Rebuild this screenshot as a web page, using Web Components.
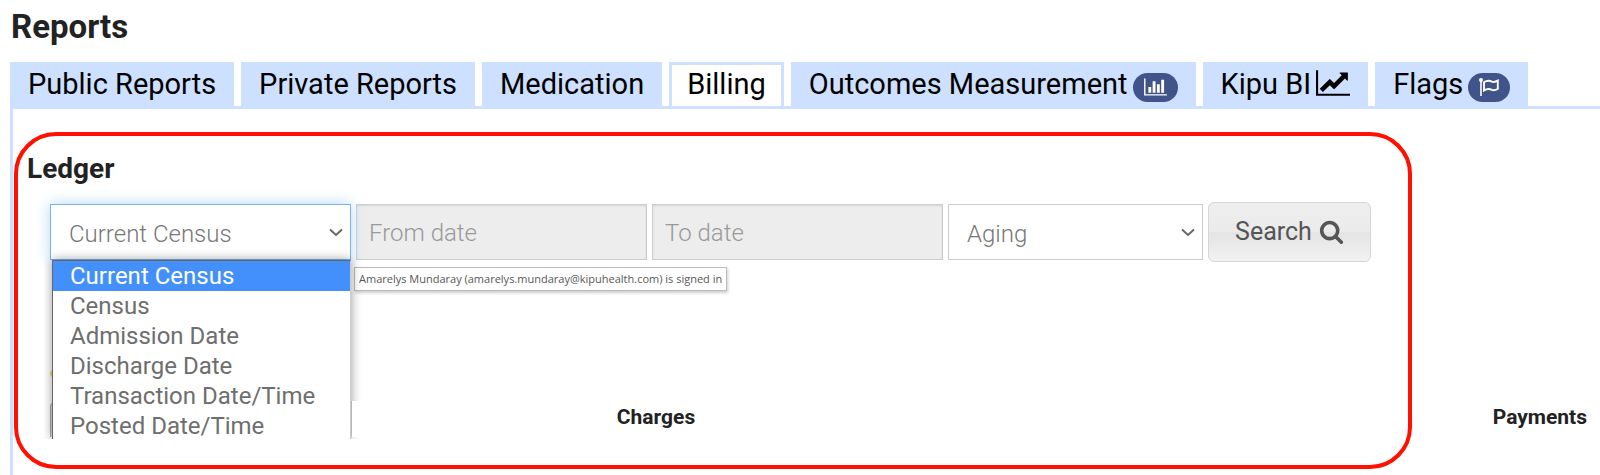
<!DOCTYPE html>
<html lang="en">
<head>
<meta charset="utf-8">
<title>Reports</title>
<style>
    body {
        margin: 0;
        background: #fff;
        color: #222;
        font-family: Roboto, "Liberation Sans", sans-serif;
        --tab: #cde0ff;
        --field-border: #ccc;
    }
</style>
</head>
<body>
<reports-page></reports-page>

<script>
const ICONS = {
    bars: ["0 0 2048 1792", `<path d="M640 896v512h-256v-512h256zm384-512v1024h-256v-1024h256zm1024 1152v128h-2048v-1536h128v1408h1920zm-640-896v768h-256v-768h256zm384-384v1152h-256v-1152h256z"/>`],
    line: ["0 0 2048 1792", `<path d="M2048 1536v128h-2048v-1536h128v1408h1920zm-128-1248v435q0 21-19.5 29.5t-35.5-7.5l-121-121-633 633q-10 10-23 10t-23-10l-233-233-416 416-192-192 585-585q10-10 23-10t23 10l233 233 464-464-121-121q-16-16-7.5-35.5t29.5-19.5h435q14 0 23 9t9 23z"/>`],
    search: ["0 0 1792 1792", `<path d="M1216 832q0-185-131.5-316.5t-316.5-131.5-316.5 131.5-131.5 316.5 131.5 316.5 316.5 131.5 316.5-131.5 131.5-316.5zm512 832q0 52-38 90t-90 38q-54 0-90-38l-343-342q-179 124-399 124-143 0-273.5-55.5t-225-150-150-225-55.5-273.5 55.5-273.5 150-225 225-150 273.5-55.5 273.5 55.5 225 150 150 225 55.5 273.5q0 220-124 399l343 343q37 37 37 90z"/>`],
    flag: ["0 0 20 18", `<circle cx="2" cy="2" r="2"/><path d="M1.2 2h1.600v16H1.200z"/><path d="M5 4.200c4-2.600 6-1.600 8-.6 2 .9 3.600.3 5.800-.9v8.300c-2.200 1.200-3.800 1.800-5.800.9-2-1-4-2-8 .6z" fill="none" stroke="currentColor" stroke-width="1.900"/>`],
};

class FaIcon extends HTMLElement {
    connectedCallback() {
        this.attachShadow({ mode: "open" });
        const [box, shape] = ICONS[this.getAttribute("name")];
        this.shadowRoot.innerHTML = `
            <style>
                :host { display: inline-flex; flex: none; }
                svg { display: block; width: 100%; height: 100%; fill: currentColor; }
            </style>
            <svg viewBox="${box}" aria-hidden="true">${shape}</svg>
        `;
    }
}
customElements.define("fa-icon", FaIcon);

class ReportTab extends HTMLElement {
    connectedCallback() {
        this.attachShadow({ mode: "open" });
        this.shadowRoot.innerHTML = `
            <style>
                :host { display: block; flex: none; }
                a {
                    box-sizing: border-box;
                    display: flex;
                    align-items: center;
                    gap: 5px;
                    height: 44px;
                    padding: 0 15px 4px;
                    border: 3px solid var(--tab);
                    border-bottom: 0;
                    background: var(--tab);
                    color: #000;
                    font-size: 29px;
                    line-height: 32px;
                    text-decoration: none;
                    white-space: nowrap;
                }
                :host([active]) a { background: #fff; }
            </style>
            <a href="#"><slot></slot></a>
        `;
    }
}
customElements.define("report-tab", ReportTab);

class TabBadge extends HTMLElement {
    connectedCallback() {
        this.attachShadow({ mode: "open" });
        this.shadowRoot.innerHTML = `
            <style>
                :host {
                    display: inline-flex;
                    align-items: center;
                    height: 29px;
                    margin-top: 7px;
                    padding: 0 11px;
                    border-radius: 15px;
                    background: #40548a;
                    color: #fff;
                }
            </style>
            <slot></slot>
        `;
    }
}
customElements.define("tab-badge", TabBadge);

class FilterSelect extends HTMLElement {
    connectedCallback() {
        this.attachShadow({ mode: "open" });
        const options = this.getAttribute("options").split("|");
        const open = this.hasAttribute("open");
        this.shadowRoot.innerHTML = `
            <style>
                :host { display: block; position: relative; color: #777; }
                select {
                    box-sizing: border-box;
                    display: block;
                    width: 100%;
                    height: 56px;
                    padding: 4px 36px 0 18px;
                    border: 1px solid var(--field-border);
                    border-radius: 0;
                    background: #fff;
                    color: inherit;
                    font: 300 24px Roboto, sans-serif;
                    appearance: none;
                    outline: none;
                }
                :host([open]) select {
                    border-color: #7ab5e8;
                    box-shadow: 0 0 14px #b5d8f5;
                }
                .arrow {
                    position: absolute;
                    top: 24px;
                    right: 8px;
                    width: 14px;
                    height: 9px;
                    pointer-events: none;
                }
                ul {
                    position: absolute;
                    z-index: 1;
                    top: 56px;
                    left: 2px;
                    right: 0;
                    box-sizing: border-box;
                    height: 179px;
                    margin: 0;
                    padding: 0;
                    list-style: none;
                    border: 1px solid #666;
                    border-right-color: #ccc;
                    border-bottom: 0;
                    background: #fff;
                    box-shadow: 0 0 10px rgba(0, 0, 0, .4);
                    clip-path: inset(-12px -12px 0 -8px);
                    color: #6e6e6e;
                    font-size: 24px;
                    line-height: 30px;
                }
                li { height: 30px; padding-left: 17px; white-space: nowrap; }
                li[aria-selected=true] { background: #4390fc; color: #fff; }
            </style>
            <select aria-label="${this.getAttribute("label")}">
                ${options.map(o => `<option>${o}</option>`).join("")}
            </select>
            <svg class="arrow" viewBox="0 0 14 9" aria-hidden="true"><path d="M1 1.500l6 5.500 6-5.500" fill="none" stroke="#666" stroke-width="2"/></svg>
            ${open ? `<ul role="listbox">${options.map((o, i) => `<li role="option" aria-selected="${i === 0}">${o}</li>`).join("")}</ul>` : ""}
        `;
    }
}
customElements.define("filter-select", FilterSelect);

class DateField extends HTMLElement {
    connectedCallback() {
        this.attachShadow({ mode: "open" });
        const label = this.getAttribute("label");
        this.shadowRoot.innerHTML = `
            <style>
                :host { display: block; }
                input {
                    box-sizing: border-box;
                    display: block;
                    width: 100%;
                    height: 56px;
                    padding: 1px 12px 0;
                    border: 1px solid var(--field-border);
                    border-radius: 0;
                    background: #ededed;
                    box-shadow: inset 0 1px 2px rgba(0, 0, 0, .1);
                    font: 300 24px Roboto, sans-serif;
                }
                input::placeholder { color: #999; opacity: 1; }
            </style>
            <input type="text" placeholder="${label}" aria-label="${label}" disabled>
        `;
    }
}
customElements.define("date-field", DateField);

class SearchButton extends HTMLElement {
    connectedCallback() {
        this.attachShadow({ mode: "open" });
        this.shadowRoot.innerHTML = `
            <style>
                :host { display: block; }
                button {
                    display: flex;
                    align-items: center;
                    justify-content: center;
                    gap: 7px;
                    width: 100%;
                    height: 60px;
                    padding: 0 0 2px;
                    border: 1px solid #d6d6d6;
                    border-radius: 6px;
                    background: linear-gradient(#eee, #ebebeb 50%, #e4e4e4 51%, #f2f2f2);
                    color: #555;
                    font: 400 25px Roboto, sans-serif;
                }
                fa-icon { width: 25px; height: 25px; }
            </style>
            <button type="button"><slot></slot><fa-icon name="search"></fa-icon></button>
        `;
    }
}
customElements.define("search-button", SearchButton);

class SignedTip extends HTMLElement {
    connectedCallback() {
        this.attachShadow({ mode: "open" });
        this.shadowRoot.innerHTML = `
            <style>
                :host {
                    padding: 0 4px;
                    border: 1px solid #bbb;
                    background: #fff;
                    box-shadow: 1px 2px 3px rgba(0, 0, 0, .2);
                    color: #575757;
                    font: 11px/22px "Open Sans", "Noto Sans", sans-serif;
                    white-space: nowrap;
                }
            </style>
            <slot></slot>
        `;
    }
}
customElements.define("signed-tip", SignedTip);

class LedgerPanel extends HTMLElement {
    connectedCallback() {
        this.attachShadow({ mode: "open" });
        this.shadowRoot.innerHTML = `
            <style>
                :host {
                    display: block;
                    position: relative;
                    box-sizing: border-box;
                    min-height: 369px;
                    padding: 42px 0 0 14px;
                    border: 3px solid var(--tab);
                    border-right: 0;
                    border-bottom: 0;
                }
                h2 { margin: 0; font-size: 28px; line-height: 36px; }
                .filters {
                    display: grid;
                    grid-template-columns: 301fr 291fr 291fr 255fr 163fr;
                    align-items: center;
                    gap: 5px;
                    max-width: 1321px;
                    margin: 15px 0 0 23px;
                    position: relative;
                    z-index: 1;
                }
                signed-tip { position: absolute; top: 65px; left: 304px; }
                .marks {
                    display: flex;
                    flex-direction: column;
                    justify-content: flex-end;
                    height: 139px;
                    margin-left: 23px;
                }
                .mark {
                    width: 7px;
                    height: 7px;
                    margin-bottom: 24px;
                    border-radius: 4px;
                    background: #edd96b;
                }
                table {
                    width: calc(100% - 23px);
                    margin-left: 23px;
                    border-collapse: separate;
                    border-spacing: 0;
                    table-layout: fixed;
                }
                th {
                    position: relative;
                    z-index: 2;
                    box-sizing: border-box;
                    height: 36px;
                    padding: 4px 0 0;
                    background: #fff;
                    font-size: 21px;
                    line-height: 24px;
                    text-align: center;
                    vertical-align: top;
                }
                th:last-child { padding-right: 13px; text-align: right; }
                td {
                    padding: 0;
                    border-left: 1px solid #aaa;
                    border-radius: 6px 0 0 0;
                    background: #ddd;
                }
                .callout {
                    position: absolute;
                    z-index: 3;
                    top: 23px;
                    left: 1px;
                    right: 188px;
                    bottom: 6px;
                    border: 4px solid #ff1000;
                    border-radius: 42px;
                    pointer-events: none;
                }
            </style>
            <h2>Ledger</h2>
            <div class="filters">
                <filter-select open label="Date type" options="Current Census|Census|Admission Date|Discharge Date|Transaction Date/Time|Posted Date/Time"></filter-select>
                <date-field label="From date"></date-field>
                <date-field label="To date"></date-field>
                <filter-select label="Aging" options="Aging"></filter-select>
                <search-button>Search</search-button>
                <signed-tip role="tooltip">Amarelys Mundaray (amarelys.mundaray@kipuhealth.com) is signed in</signed-tip>
            </div>
            <div class="marks"><div class="mark"></div></div>
            <table>
                <colgroup><col style="width: 302px"><col style="width: 608px"><col></colgroup>
                <tr><td></td><th scope="col">Charges</th><th scope="col">Payments</th></tr>
            </table>
            <div class="callout"></div>
        `;
    }
}
customElements.define("ledger-panel", LedgerPanel);

class ReportsPage extends HTMLElement {
    connectedCallback() {
        this.attachShadow({ mode: "open" });
        this.shadowRoot.innerHTML = `
            <style>
                :host { display: block; padding: 9px 0 0 10px; }
                h1 { margin: 0 0 17px 1px; font-size: 33px; line-height: 36px; }
                nav { display: flex; gap: 7px; }
                .bars { width: 23px; height: 20px; }
                .line { width: 34px; height: 30px; margin-bottom: 2px; }
                .flag { width: 20px; height: 18px; }
            </style>
            <h1>Reports</h1>
            <nav>
                <report-tab>Public Reports</report-tab>
                <report-tab>Private Reports</report-tab>
                <report-tab>Medication</report-tab>
                <report-tab active>Billing</report-tab>
                <report-tab>Outcomes Measurement<tab-badge><fa-icon class="bars" name="bars"></fa-icon></tab-badge></report-tab>
                <report-tab>Kipu BI<fa-icon class="line" name="line"></fa-icon></report-tab>
                <report-tab>Flags<tab-badge><fa-icon class="flag" name="flag"></fa-icon></tab-badge></report-tab>
            </nav>
            <ledger-panel></ledger-panel>
        `;
    }
}
customElements.define("reports-page", ReportsPage);
</script>
</body>
</html>
